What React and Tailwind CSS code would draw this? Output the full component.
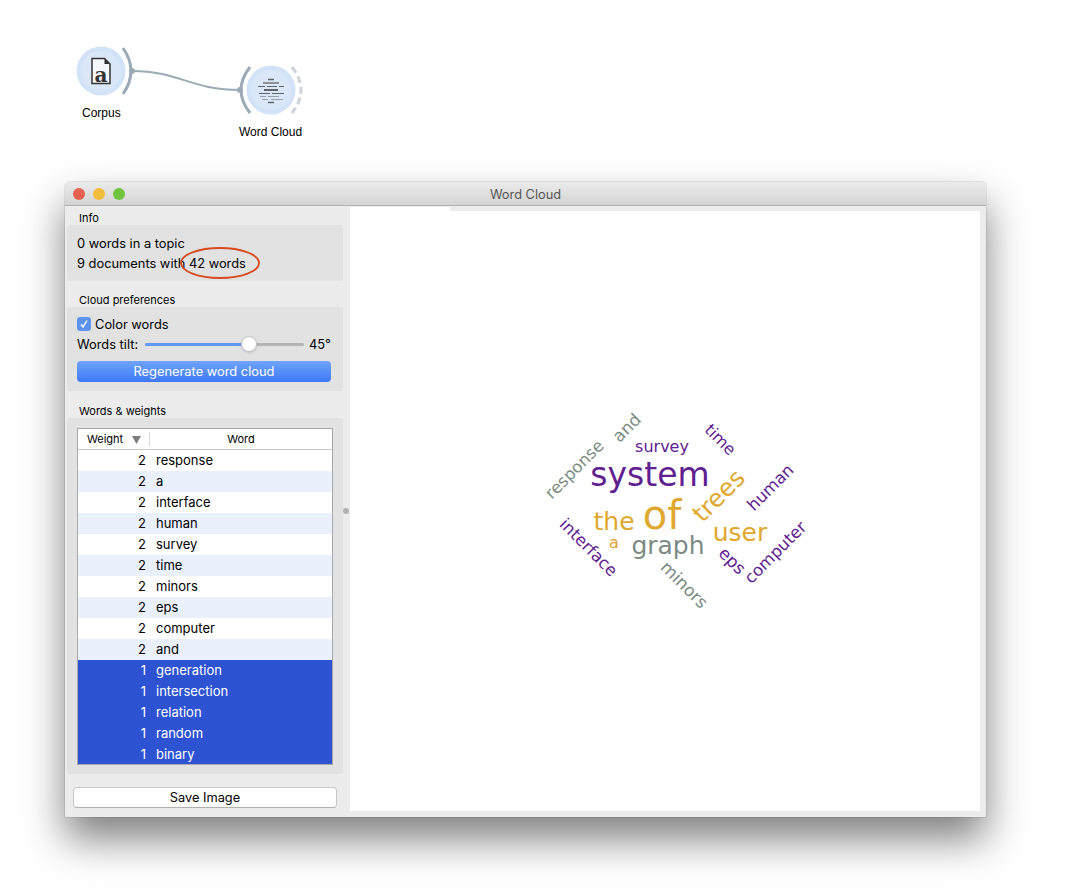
import React from "react";

const rows = [
  [2, "response"], [2, "a"], [2, "interface"], [2, "human"], [2, "survey"],
  [2, "time"], [2, "minors"], [2, "eps"], [2, "computer"], [2, "and"],
  [1, "generation"], [1, "intersection"], [1, "relation"], [1, "random"], [1, "binary"],
];

// positions are the word centres inside the cloud
const words = [
  ["system", "left-[300px] top-[263px] text-[33px] text-[#5f2090]"],
  ["of", "left-[312px] top-[304px] text-[40px] text-[#e0a82e]"],
  ["the", "left-[264px] top-[310px] text-[25px] text-[#e0a82e]"],
  ["graph", "left-[318px] top-[334px] text-[25px] text-[#7b8b83]"],
  ["user", "left-[390px] top-[321px] text-[25px] text-[#e0a82e]"],
  ["trees", "left-[369px] top-[285px] text-[24.500px] text-[#e0a82e] -rotate-45"],
  ["survey", "left-[312px] top-[236px] text-[16px] text-[#5f2090]"],
  ["response", "left-[225px] top-[259px] text-[16.500px] text-[#7b8b83] -rotate-45"],
  ["and", "left-[277px] top-[217px] text-[17px] text-[#7b8b83] -rotate-45"],
  ["time", "left-[370px] top-[229px] text-[16px] text-[#5f2090] rotate-45"],
  ["human", "left-[421px] top-[277px] text-[16.500px] text-[#5f2090] -rotate-45"],
  ["interface", "left-[238px] top-[337px] text-[16.500px] text-[#5f2090] rotate-45"],
  ["a", "left-[264px] top-[332px] text-[16px] text-[#dba33a]"],
  ["minors", "left-[334px] top-[374px] text-[17px] text-[#7b8b83] rotate-45"],
  ["eps", "left-[382px] top-[350px] text-[17px] text-[#5f2090] rotate-45"],
  ["computer", "left-[426px] top-[342px] text-[16.500px] text-[#5f2090] -rotate-45"],
];

function Workflow() {
  return (
    <div className="relative h-[182px] font-['Liberation_Sans',sans-serif] text-[12px] text-black">
      <svg className="absolute left-0 top-0" width="400" height="182" fill="none">
        <circle cx="101" cy="71" r="24.500" fill="#d3e3f7" />
        <circle cx="101" cy="71" r="20" fill="#d9e7f9" />
        <path d="M123 48 Q139 71 123 94" stroke="#9aabb5" strokeWidth="3" />
        <path d="M132 71 C180 71 190 90 240 90" stroke="#9aabb5" strokeWidth="2" />
        <circle cx="132" cy="71" r="3" fill="#9aabb5" />
        <circle cx="240" cy="90" r="3" fill="#9aabb5" />
        <path d="M92 58.500 H104.500 L110 64 V83.500 H92 Z" fill="#f4f7fb" stroke="#333" strokeWidth="1.500" />
        <path d="M104.500 58.500 V64 H110 Z" fill="#333" />
        <text x="101" y="81.500" textAnchor="middle" fontFamily="'DejaVu Serif', serif" fontWeight="700" fontSize="20" fill="#333">a</text>

        <circle cx="271" cy="90" r="24.500" fill="#d3e3f7" />
        <circle cx="271" cy="90" r="20" fill="#d9e7f9" />
        <path d="M250 67 Q232 90 250 113" stroke="#9aabb5" strokeWidth="3" />
        <path d="M292 67 Q310 90 292 113" stroke="#ccd4da" strokeWidth="3" strokeDasharray="7 4" />
        <g stroke="#5f6569" strokeWidth="1">
          <path d="M268 79.500 H274" strokeWidth="1.500" />
          <path d="M263 83 H279" strokeWidth="2" stroke="#8a9095" />
          <path d="M258 86.500 H265 M267 86.500 H277 M279 86.500 H284" />
          <path d="M264 90 H278" strokeWidth="2" />
          <path d="M259 93.500 H270 M272 93.500 H284" />
          <path d="M260 96.500 H266 M268 96.500 H279" stroke="#9aa0a5" />
          <path d="M262 99.500 H268 M271 99.500 H283" stroke="#9aa0a5" />
          <path d="M268 102.500 H274" strokeWidth="1.500" />
        </g>
      </svg>
      <span className="absolute left-[82px] top-[104px]">Corpus</span>
      <span className="absolute left-[239px] top-[123px]">Word Cloud</span>
    </div>
  );
}

function GroupLabel({ children, height }) {
  return (
    <div className={`pl-[12px] text-[11px] leading-[13px] flex items-end ${height}`}>{children}</div>
  );
}

function ControlPanel() {
  return (
    <div className="w-[285px] shrink-0 pl-[2px] relative">
      <GroupLabel height="h-[19px]">Info</GroupLabel>
      <div className="relative w-[276px] h-[56px] bg-[#e2e2e2] rounded-[3px] pl-[10px] pt-[9px] text-[12.850px] leading-[20px]">
        <div>0 words in a topic</div>
        <div>9 documents with 42 words</div>
        <svg className="absolute left-[112px] top-[22px]" width="82" height="34" fill="none">
          <ellipse cx="41" cy="16" rx="39" ry="15" stroke="#d8491f" strokeWidth="1.800" />
        </svg>
      </div>
      <GroupLabel height="h-[26px]">Cloud preferences</GroupLabel>
      <div className="w-[276px] h-[84px] bg-[#e2e2e2] rounded-[3px] px-[10px] pt-[10px] text-[12.850px]">
        <div className="flex items-center gap-[4px] h-[14px]">
          <div className="w-[14px] h-[14px] rounded-[3px] bg-[#5c93ee] flex items-center justify-center">
            <svg width="10" height="10" viewBox="0 0 10 10" fill="none">
              <path d="M2 5.500 L4 8 L8 1.500" stroke="#fff" strokeWidth="1.400" />
            </svg>
          </div>
          <span className="pt-[1px]">Color words</span>
        </div>
        <div className="flex items-center h-[20px] mt-[3px]">
          <span className="w-[68px] pt-[2px]">Words tilt:</span>
          <div className="relative w-[159px] h-[3px] rounded-full bg-[#b4b4b4]">
            <div className="w-[104px] h-[3px] rounded-full bg-[#5f98f5]" />
            <div className="absolute left-[96px] -top-[6.500px] w-[16px] h-[16px] rounded-full bg-white border border-[#c4c4c4] shadow-sm" />
          </div>
          <span className="ml-[5px] pt-[2px]">45°</span>
        </div>
        <div className="mt-[7px] w-[254px] h-[21px] rounded-[4px] bg-gradient-to-b from-[#6fa3fb] to-[#3f78f5] text-white text-center leading-[22px]">
          Regenerate word cloud
        </div>
      </div>
      <GroupLabel height="h-[27px]">Words &amp; weights</GroupLabel>
      <div className="w-[276px] h-[356px] bg-[#e2e2e2] rounded-[3px] pl-[10px] pt-[10px]">
        <div className="w-[256px] h-[337px] border border-[#a8a8a8] bg-white text-[13px] overflow-hidden">
          <div className="flex h-[21px] items-center text-[11px] border-b border-[#c8c8c8] bg-white">
            <div className="w-[72px] flex items-center pl-[9px] border-r border-[#d8d8d8] h-[14px]">
              <span>Weight</span>
              <svg className="ml-[9px]" width="9" height="9" viewBox="0 0 9 9"><path d="M0 1 H9 L4.500 9 Z" fill="#7d7d7d" /></svg>
            </div>
            <div className="flex-1 text-center">Word</div>
          </div>
          {rows.map(([weight, word], i) => (
            <div
              key={word}
              className={`flex h-[21px] items-center ${i >= 10 ? "bg-[#2d52d2] text-white" : i % 2 ? "bg-[#eaf1fd]" : "bg-white"}`}
            >
              <span className="w-[68px] text-right">{weight}</span>
              <span className="ml-[10px]">{word}</span>
            </div>
          ))}
        </div>
      </div>
      <div className="mt-[13px] ml-[6px] w-[264px] h-[21px] bg-white rounded-[4px] border border-[#c8c8c8] border-b-[#b0b0b0] text-[12.800px] text-center leading-[19px]">
        Save Image
      </div>
      <div className="absolute left-[278px] top-[302px] w-[6px] h-[6px] rounded-full bg-[#b0b0b0]" />
    </div>
  );
}

export default function App() {
  return (
    <div className="w-[1080px] h-[891px] overflow-hidden bg-white font-['Inter',sans-serif] text-black">
      <Workflow />
      <div className="ml-[65px] w-[921px] h-[635px] rounded-t-[5px] bg-[#ececec] shadow-[0_0_0_1px_rgba(0,0,0,0.08),0_22px_40px_rgba(0,0,0,0.5)] flex flex-col">
        <div className="relative h-[24px] shrink-0 rounded-t-[5px] bg-gradient-to-b from-[#ebebeb] to-[#d4d4d4] border-b border-[#b0b0b0] flex items-center justify-center pt-[2px] text-[12.800px] text-[#555]">
          <div className="absolute left-[8px] top-[6px] flex gap-[8px]">
            <div className="w-[12px] h-[12px] rounded-full bg-[#e8604f]" />
            <div className="w-[12px] h-[12px] rounded-full bg-[#f2bd3c]" />
            <div className="w-[12px] h-[12px] rounded-full bg-[#70c440]" />
          </div>
          Word Cloud
        </div>
        <div className="flex flex-1">
          <ControlPanel />
          <div className="w-[630px] h-[604px] mt-[1px] flex flex-col">
            <div className="w-[100px] h-[4px] bg-white" />
            <div className="relative flex-1 bg-white font-['DejaVu_Sans',sans-serif]">
              {words.map(([word, cls]) => (
                <span key={word} className={`absolute -translate-x-1/2 -translate-y-1/2 whitespace-nowrap leading-none ${cls}`}>
                  {word}
                </span>
              ))}
            </div>
          </div>
        </div>
      </div>
    </div>
  );
}
